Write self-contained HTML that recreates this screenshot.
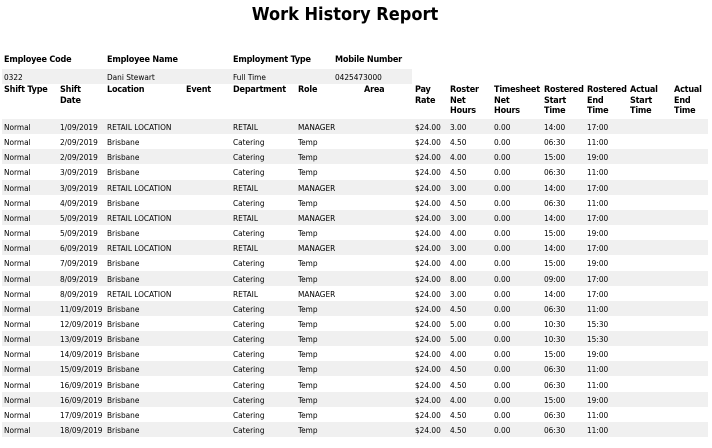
<!DOCTYPE html>
<html><head><meta charset="utf-8"><style>
body{margin:0;width:712px;height:448px;background:#fff;font-family:"DejaVu Sans Condensed","Liberation Sans",sans-serif;color:#000;position:relative;overflow:hidden}
h1{position:absolute;top:4px;left:0;width:690px;text-align:center;margin:0;font-size:18px;font-family:"DejaVu Sans Condensed","Liberation Sans",sans-serif;font-weight:bold}
.a{position:absolute;font-size:8.2px;white-space:nowrap}
.b{position:absolute;font-size:9px;font-weight:bold;line-height:10.5px;letter-spacing:-0.2px}
.r{position:absolute;left:2px;width:706px;height:15px}
.s{background:#f0f0f0}
.r span{position:absolute;top:3px;font-size:8.2px;white-space:nowrap}
</style></head><body>
<h1>Work History Report</h1>
<div class="b" style="left:4px;top:55px">Employee Code</div>
<div class="b" style="left:107px;top:55px">Employee Name</div>
<div class="b" style="left:233px;top:55px">Employment Type</div>
<div class="b" style="left:335px;top:55px">Mobile Number</div>
<div style="position:absolute;left:2px;top:69px;width:410px;height:15px;background:#f0f0f0"></div>
<div class="a" style="left:4px;top:72px">0322</div>
<div class="a" style="left:107px;top:72px">Dani Stewart</div>
<div class="a" style="left:233px;top:72px">Full Time</div>
<div class="a" style="left:335px;top:72px">0425473000</div>
<div class="b" style="left:4px;top:85px">Shift Type</div>
<div class="b" style="left:60px;top:85px">Shift<br>Date</div>
<div class="b" style="left:107px;top:85px">Location</div>
<div class="b" style="left:186px;top:85px">Event</div>
<div class="b" style="left:233px;top:85px">Department</div>
<div class="b" style="left:298px;top:85px">Role</div>
<div class="b" style="left:364px;top:85px">Area</div>
<div class="b" style="left:415px;top:85px">Pay<br>Rate</div>
<div class="b" style="left:450px;top:85px">Roster<br>Net<br>Hours</div>
<div class="b" style="left:494px;top:85px">Timesheet<br>Net<br>Hours</div>
<div class="b" style="left:544px;top:85px">Rostered<br>Start<br>Time</div>
<div class="b" style="left:587px;top:85px">Rostered<br>End<br>Time</div>
<div class="b" style="left:630px;top:85px">Actual<br>Start<br>Time</div>
<div class="b" style="left:674px;top:85px">Actual<br>End<br>Time</div>
<div id="rows"></div>
<script>
var d=[["1/09/2019","RETAIL LOCATION","RETAIL","MANAGER","3.00","14:00","17:00"],
["2/09/2019","Brisbane","Catering","Temp","4.50","06:30","11:00"],
["2/09/2019","Brisbane","Catering","Temp","4.00","15:00","19:00"],
["3/09/2019","Brisbane","Catering","Temp","4.50","06:30","11:00"],
["3/09/2019","RETAIL LOCATION","RETAIL","MANAGER","3.00","14:00","17:00"],
["4/09/2019","Brisbane","Catering","Temp","4.50","06:30","11:00"],
["5/09/2019","RETAIL LOCATION","RETAIL","MANAGER","3.00","14:00","17:00"],
["5/09/2019","Brisbane","Catering","Temp","4.00","15:00","19:00"],
["6/09/2019","RETAIL LOCATION","RETAIL","MANAGER","3.00","14:00","17:00"],
["7/09/2019","Brisbane","Catering","Temp","4.00","15:00","19:00"],
["8/09/2019","Brisbane","Catering","Temp","8.00","09:00","17:00"],
["8/09/2019","RETAIL LOCATION","RETAIL","MANAGER","3.00","14:00","17:00"],
["11/09/2019","Brisbane","Catering","Temp","4.50","06:30","11:00"],
["12/09/2019","Brisbane","Catering","Temp","5.00","10:30","15:30"],
["13/09/2019","Brisbane","Catering","Temp","5.00","10:30","15:30"],
["14/09/2019","Brisbane","Catering","Temp","4.00","15:00","19:00"],
["15/09/2019","Brisbane","Catering","Temp","4.50","06:30","11:00"],
["16/09/2019","Brisbane","Catering","Temp","4.50","06:30","11:00"],
["16/09/2019","Brisbane","Catering","Temp","4.00","15:00","19:00"],
["17/09/2019","Brisbane","Catering","Temp","4.50","06:30","11:00"],
["18/09/2019","Brisbane","Catering","Temp","4.50","06:30","11:00"]];
var h="";
for(var i=0;i<d.length;i++){var r=d[i];
h+='<div class="r'+(i%2==0?' s':'')+'" style="top:'+(119+i*15.15).toFixed(2)+'px">'+
'<span style="left:2px">Normal</span><span style="left:58px">'+r[0]+'</span><span style="left:105px">'+r[1]+'</span><span style="left:231px">'+r[2]+'</span><span style="left:296px">'+r[3]+'</span><span style="left:413px">$24.00</span><span style="left:448px">'+r[4]+'</span><span style="left:492px">0.00</span><span style="left:542px">'+r[5]+'</span><span style="left:585px">'+r[6]+'</span></div>';}
document.getElementById("rows").innerHTML=h;
</script>
</body></html>
